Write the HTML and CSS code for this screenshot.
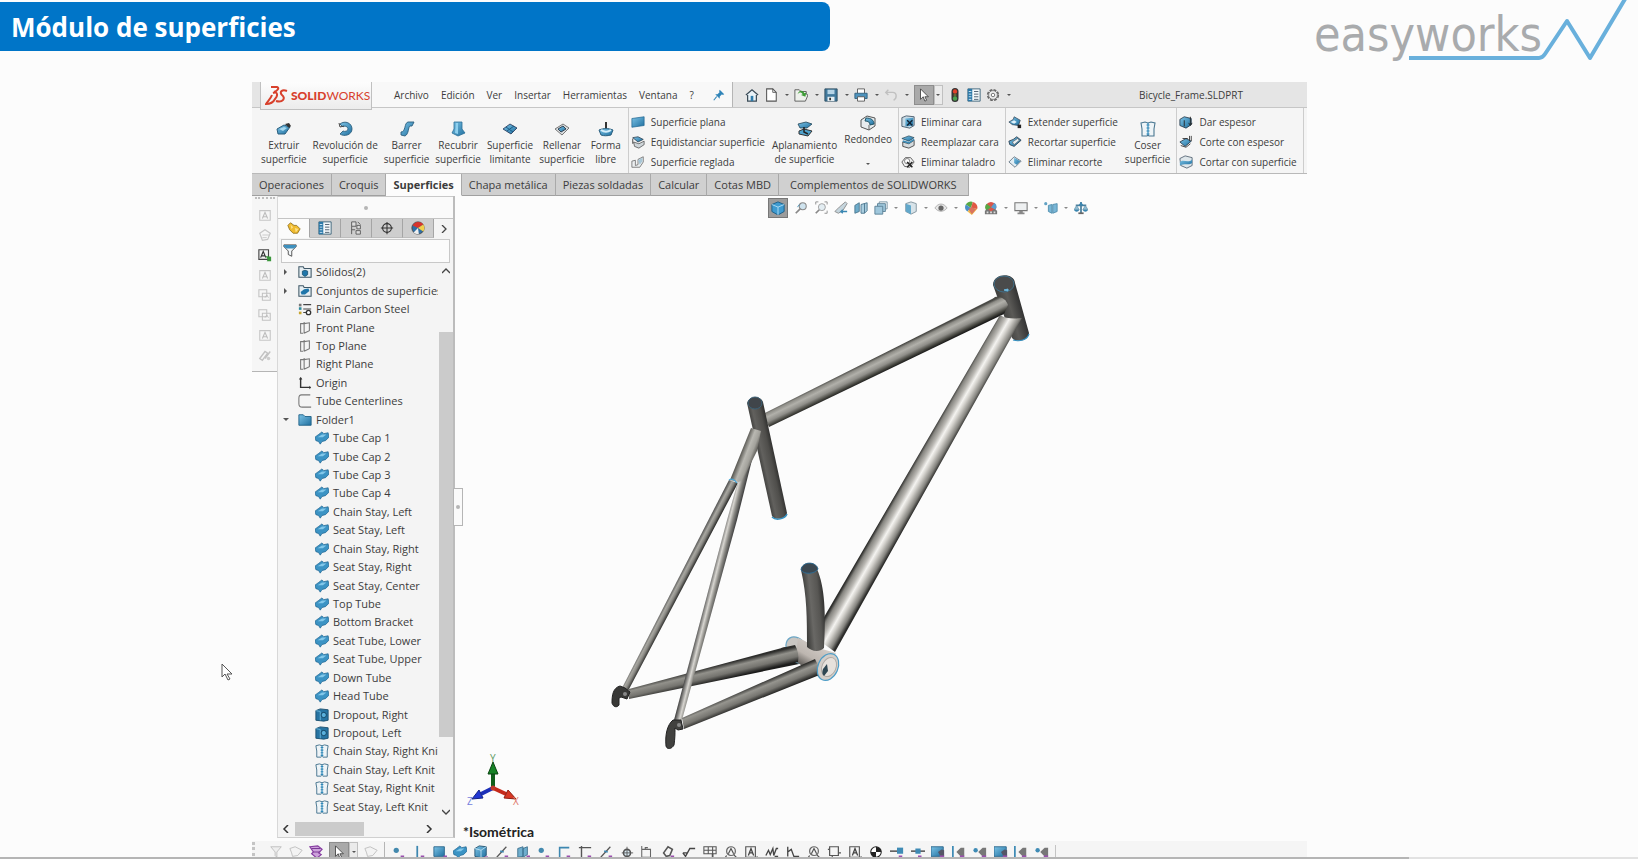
FILE: index.html
```html
<!DOCTYPE html>
<html lang="es">
<head>
<meta charset="utf-8">
<meta name="viewport" content="width=device-width, initial-scale=1">
<title>Módulo de superficies</title>
<link rel="stylesheet" href="styles.css">
</head>
<body>
<svg class="sprite" aria-hidden="true">
  <defs>
    <linearGradient id="gBlue" x1="0" y1="0" x2="1" y2="1"><stop offset="0" stop-color="#7cc3e6"/><stop offset="1" stop-color="#1f6f9f"/></linearGradient>
  </defs>
  <symbol id="surf" viewBox="0 0 16 16"><path d="M0 7l4-3 4-3 2 2 5-1 1 5-4 4-4 1-2 3-2-3-3-1z" fill="#3b93c4" stroke="#1c638f" stroke-width=".8"/><path d="M3 7l5-3 5 0-4 3z" fill="#83c8ea"/></symbol>
  <symbol id="extrude" viewBox="0 0 16 16"><path d="M1 8l7-4 6 2-5 7-7 0z" fill="url(#gBlue)" stroke="#2b5f7e"/><path d="M9 3l4-1 2 3-2 2z" fill="#333"/><path d="M3 8l5-2 3 1-4 3z" fill="#a6d8ef"/></symbol>
  <symbol id="revolve" viewBox="0 0 16 16"><path d="M3 3c5-4 12-1 12 5s-8 8-12 5l3-3c2 1 5 0 5-2s-3-4-5-2z" fill="url(#gBlue)" stroke="#2b5f7e" stroke-width=".9"/><path d="M2 2l1 4 4-1" fill="none" stroke="#444"/></symbol>
  <symbol id="sweep" viewBox="0 0 16 16"><path d="M2 14v-3c5 0 3-9 7-10h6l-2 4h-2c-2 1-1 8-5 10z" fill="url(#gBlue)" stroke="#2b5f7e" stroke-width=".9"/></symbol>
  <symbol id="loft" viewBox="0 0 16 16"><path d="M4 1h8v7l3 4-7 3-6-3 2-4z" fill="url(#gBlue)" stroke="#2b6e97" stroke-width=".8"/><path d="M6 2h2v11l-3-1z" fill="#8fd0ee"/></symbol>
  <symbol id="bound" viewBox="0 0 16 16"><path d="M1 8l7-5 7 4-6 6z" fill="url(#gBlue)" stroke="#235" stroke-width=".8"/><path d="M4 6l7 5M12 5l-7 5" stroke="#1a5b86"/></symbol>
  <symbol id="fill" viewBox="0 0 16 16"><path d="M1 8l8-5 6 4-7 7z" fill="#d9dcde" stroke="#777"/><path d="M4 8l5-3 3 3-5 3z" fill="url(#gBlue)" stroke="#345"/></symbol>
  <symbol id="free" viewBox="0 0 16 16"><path d="M1 9c5-2 9-2 14 0l-2 5c-4 1-7 1-10 0z" fill="url(#gBlue)" stroke="#2b5f7e"/><path d="M3 9c3 2 7 2 10 0" stroke="#d5eefa" stroke-width="2" fill="none"/><path d="M7 1h2v6h-2z" fill="#333"/></symbol>
  <symbol id="planar" viewBox="0 0 16 16"><path d="M1 4l14-2v10l-14 2z" fill="url(#gBlue)" stroke="#1c638f" stroke-width=".8"/></symbol>
  <symbol id="offset" viewBox="0 0 16 16"><path d="M2 3l6-1 6 3-6 3z" fill="url(#gBlue)" stroke="#234" stroke-width=".8"/><path d="M3 8l6 2 6-3v4l-6 4-5-2z" fill="#cfd6da" stroke="#444" stroke-width=".8"/><path d="M2 4v6" stroke="#333"/></symbol>
  <symbol id="ruled" viewBox="0 0 16 16"><path d="M1 7l4-1v6l3-1V5l6-3v6l-4 6-9 0z" fill="#eceff1" stroke="#666" stroke-width=".9"/><path d="M8 6l5-3v4l-3 4z" fill="#a8c6d6"/></symbol>
  <symbol id="flatten" viewBox="0 0 16 16"><path d="M1 3l8-2 6 2-5 4H3z" fill="url(#gBlue)" stroke="#245" stroke-width=".8"/><path d="M2 10l5-2 8 2-4 5-9-2z" fill="#4fa3ce" stroke="#333"/><path d="M7 6v5l4 2" stroke="#222" fill="none" stroke-width="1.5"/></symbol>
  <symbol id="fillet" viewBox="0 0 16 16"><path d="M1 5l6-4 8 2v8l-6 4-8-3z" fill="#e8ecee" stroke="#555"/><path d="M6 3c5 0 8 2 8 6l-4 1c0-3-2-4-5-4z" fill="url(#gBlue)" stroke="#256"/><path d="M9 10v5" stroke="#666"/></symbol>
  <symbol id="delface" viewBox="0 0 16 16"><path d="M1 3l5-2 9 1v10l-5 3-9-2z" fill="#c7dae5" stroke="#456"/><path d="M5 4l9-1v9l-9 1z" fill="url(#gBlue)"/><path d="M7 6l6 6M13 6l-6 6" stroke="#123" stroke-width="1.6"/></symbol>
  <symbol id="replace" viewBox="0 0 16 16"><path d="M1 4l8-3 6 2-6 4z" fill="url(#gBlue)" stroke="#245" stroke-width=".8"/><path d="M2 8l7 2 6-4v6l-6 3-7-2z" fill="#d5dbde" stroke="#444"/><path d="M2 7l7 2 6-4" fill="none" stroke="#3b8bb6" stroke-width="2"/></symbol>
  <symbol id="delhole" viewBox="0 0 16 16"><path d="M1 8l4-5 6 0 4 5-5 6-6-1z" fill="#f2f2f2" stroke="#555"/><circle cx="7" cy="7" r="3" fill="#fff" stroke="#777"/><path d="M7 8l6 6M13 8l-6 6" stroke="#222" stroke-width="1.8"/></symbol>
  <symbol id="extend" viewBox="0 0 16 16"><path d="M1 8l5-3 1-3 7 4-2 6-7-1z" fill="url(#gBlue)" stroke="#345" stroke-width=".8"/><path d="M3 8l4-2 3 2-3 2z" fill="#dff1fa"/><path d="M11 11h4v4h-4z" fill="#222"/></symbol>
  <symbol id="trim" viewBox="0 0 16 16"><path d="M1 7l5-2 4-3 5 4-8 7-5-2z" fill="url(#gBlue)" stroke="#234" stroke-width=".9"/><path d="M5 8l6-4 2 2-6 5z" fill="#e8eef1" stroke="#444" stroke-width=".6"/></symbol>
  <symbol id="untrim" viewBox="0 0 16 16"><path d="M1 8l6-6 8 5-7 7z" fill="#e2edf3" stroke="#567" stroke-width=".9"/><path d="M7 3l7 4-4 4-3-2z" fill="url(#gBlue)"/></symbol>
  <symbol id="knit" viewBox="0 0 16 16"><path d="M1 2l4-1 3 1 3-1 4 1-1 6v7H9l-1-1-1 1H2V8z" fill="#eef4f7" stroke="#4a7791" stroke-width="1.1"/><path d="M8 2v12M6.500 4h3M6.500 7h3M6.500 10h3M6.500 13h3" stroke="#3088b8" stroke-width="1.2"/></symbol>
  <symbol id="thick" viewBox="0 0 16 16"><path d="M1 5l5-3 8 2v7l-6 4-7-3z" fill="url(#gBlue)" stroke="#234" stroke-width=".9"/><path d="M6 6v7M13 2v9M11 9l2 3 2-3" stroke="#222" fill="none"/></symbol>
  <symbol id="thickcut" viewBox="0 0 16 16"><path d="M1 8l7-4 6 3-7 6z" fill="url(#gBlue)" stroke="#234" stroke-width=".9"/><path d="M2 12l6 2 5-4M12 1v6M14 1v6M4 4h6" stroke="#333" fill="none"/></symbol>
  <symbol id="surfcut" viewBox="0 0 16 16"><path d="M1 4l6-3 8 2v9l-6 3-7-3z" fill="#dfe7eb" stroke="#456" stroke-width=".9"/><path d="M1 8c4-4 9 2 14-3v4c-4 3-9 0-14 3z" fill="url(#gBlue)"/></symbol>
  <symbol id="pin" viewBox="0 0 16 16"><path d="M9 1l6 6-2 1-1-1-3 3 0 3-6-6h3l3-3-1-1z" fill="#2f84b8"/><path d="M5 10l-4 5" stroke="#2f84b8" stroke-width="1.500"/></symbol>
  <symbol id="home" viewBox="0 0 16 16"><path d="M1 8l7-6 7 6M3 8v7h10V8" fill="#e8f2f8" stroke="#3b4b57" stroke-width="1.400"/><path d="M6.500 9h3v6h-3z" fill="#2f7cab"/></symbol>
  <symbol id="new" viewBox="0 0 16 16"><path d="M3 1h7l4 4v10H3z" fill="#fff" stroke="#555" stroke-width="1.200"/><path d="M10 1v4h4" fill="none" stroke="#555"/></symbol>
  <symbol id="open" viewBox="0 0 16 16"><path d="M1 15V2h5l2 2h6v3l2 1-3 7z" fill="#eef1ec" stroke="#555"/><path d="M4 7c2-5 6-5 8-1l2-1-1 5-5-2 2-1c-2-3-4-2-6 0z" fill="#3c9b35"/></symbol>
  <symbol id="save" viewBox="0 0 16 16"><path d="M1 1h14v14H1z" fill="#41799c" stroke="#2a4a5e"/><path d="M4 2h8v5H4z" fill="#b6d4e6"/><path d="M4 10h8v5H4z" fill="#e6eef2"/><path d="M6 11h2v3H6z" fill="#333"/></symbol>
  <symbol id="print" viewBox="0 0 16 16"><path d="M4 6V1h8v5" fill="#fff" stroke="#555"/><path d="M1 6h14v6H1z" fill="#4e93bd" stroke="#2f5f7e"/><path d="M4 10h8v5H4z" fill="#fff" stroke="#555"/></symbol>
  <symbol id="undo" viewBox="0 0 16 16"><path d="M2 5h8c5 0 5 7 1 9M5 2L2 5l3 3" fill="none" stroke="#c0c0c0" stroke-width="1.600"/></symbol>
  <symbol id="arrow" viewBox="0 0 16 16"><path d="M4 1v12l3-3 2 5 2-1-2-4h4z" fill="#fff" stroke="#444"/></symbol>
  <symbol id="traffic" viewBox="0 0 16 16"><rect x="4" y="0" width="8" height="16" rx="4" fill="#333"/><circle cx="8" cy="4" r="2.500" fill="#e0402a"/><circle cx="8" cy="8" r="1.800" fill="#6b6434"/><circle cx="8" cy="12" r="2.500" fill="#4ba24e"/></symbol>
  <symbol id="props" viewBox="0 0 16 16"><path d="M1 1h14v14H1z" fill="#f4f8fa" stroke="#345b73"/><path d="M1 1h5v14H1z" fill="#2d79a8"/><path d="M8 4h5M8 7h5M8 10h5M8 13h5" stroke="#456"/><path d="M2 4h3M2 7h3M2 10h3M2 13h3" stroke="#d9edf8"/></symbol>
  <symbol id="gear" viewBox="0 0 16 16"><circle cx="8" cy="8" r="6" fill="none" stroke="#666" stroke-width="2" stroke-dasharray="3.200 1.500"/><circle cx="8" cy="8" r="5" fill="#eee" stroke="#777"/><circle cx="8" cy="8" r="2" fill="#fff" stroke="#666"/></symbol>
  <symbol id="cube" viewBox="0 0 16 16"><path d="M1 4l7-3 7 3v8l-7 4-7-4z" fill="#3f9bd0" stroke="#155a86"/><path d="M1 4l7 3 7-3M8 7v9" stroke="#b7e0f5" fill="none"/></symbol>
  <symbol id="lens" viewBox="0 0 16 16"><circle cx="10" cy="6" r="4" fill="#cfe3ee" stroke="#888" stroke-width="1.200"/><path d="M7 9l-5 5" stroke="#888" stroke-width="2"/><path d="M4 7l2-3" stroke="#4b96bf"/></symbol>
  <symbol id="lensarea" viewBox="0 0 16 16"><circle cx="9" cy="7" r="4" fill="#e3edf2" stroke="#999"/><path d="M6 10l-4 4" stroke="#888" stroke-width="2"/><path d="M2 4V1h3M12 1h3v3M15 11v3h-3" fill="none" stroke="#888"/></symbol>
  <symbol id="prev" viewBox="0 0 16 16"><path d="M1 12l5-5 7-6 2 2-5 8-5 3z" fill="#c5d5dd" stroke="#888"/><path d="M15 12H8l2-2M8 12l2 2" stroke="#3987b3" fill="none" stroke-width="1.500"/></symbol>
  <symbol id="section" viewBox="0 0 16 16"><path d="M1 5l5-3v10l-5 2z" fill="#6eaccb" stroke="#48748b"/><path d="M8 4l7-2v9l-3 3-4 0z" fill="#a9cddf" stroke="#48748b"/><path d="M12 3v11" stroke="#48748b"/></symbol>
  <symbol id="orient" viewBox="0 0 16 16"><path d="M1 6h9v9H1zM4 6V3h9v9h-3" fill="#9fc7dc" stroke="#587e93"/><path d="M6 3V1h9v8h-2" fill="none" stroke="#6d8c9c"/></symbol>
  <symbol id="display" viewBox="0 0 16 16"><path d="M2 3l6-2 6 2v9l-6 3-6-3z" fill="#d7e3e9" stroke="#7b8e98"/><path d="M2 3l6 2v10l-6-3z" fill="#62a8cb"/></symbol>
  <symbol id="eye" viewBox="0 0 16 16"><path d="M1 8c4-6 10-6 14 0-4 5-10 5-14 0z" fill="#e8e8e8" stroke="#aaa"/><circle cx="8" cy="8" r="3" fill="#666"/></symbol>
  <symbol id="ball" viewBox="0 0 16 16"><path d="M8 8L2 4c2-4 7-4 8-3z" fill="#58a945"/><path d="M8 8L2 4c-2 4 0 7 2 8z" fill="#4a90c8"/><path d="M8 8l2-7c5 1 6 6 5 8z" fill="#e05a44"/><path d="M4 12l4-4 7 1-6 7z" fill="#f0b94a"/><path d="M5 9l4-2 5 2-5 6z" fill="#d9745f"/></symbol>
  <symbol id="beach" viewBox="0 0 16 16"><circle cx="8" cy="8" r="7" fill="#2e6fa5" stroke="#444"/><path d="M8 8L2 5a7 7 0 0 1 12-1z" fill="#d8352c"/><path d="M8 8l6-4a7 7 0 0 1 0 8z" fill="#f2d04c"/><path d="M8 8L3 13a7 7 0 0 0 6 2z" fill="#eee"/></symbol>
  <symbol id="scene" viewBox="0 0 16 16"><circle cx="8" cy="7" r="6" fill="#d9564a"/><path d="M8 7L3 3a6 6 0 0 0 0 8z" fill="#58a945"/><path d="M8 7l4-5a6 6 0 0 1 1 8z" fill="#5c9fd0"/><path d="M1 11l3-2 4 3 4-3 3 2v4H1z" fill="#777"/><path d="M3 12h2v2H3zM7 12h2v2H7zM11 12h2v2h-2z" fill="#ddd"/></symbol>
  <symbol id="monitor" viewBox="0 0 16 16"><path d="M1 2h14v9H1z" fill="#eef0f1" stroke="#777" stroke-width="1.200"/><path d="M6 11h4v2h2v2H4v-2h2z" fill="#888"/></symbol>
  <symbol id="xray" viewBox="0 0 16 16"><path d="M5 5l4-1v10l-4-2zM10 4l5-1v9l-5 2z" fill="#79b6d6" stroke="#4d8cac"/><circle cx="2" cy="3" r="1.800" fill="#62a2c4"/></symbol>
  <symbol id="scale" viewBox="0 0 16 16"><path d="M8 1v13M2 5h12" stroke="#4b7f9c" stroke-width="2"/><path d="M8 1l3 4H5z" fill="#3a86b0"/><path d="M3 5l-3 5h6zM13 5l-3 5h6z" fill="#8dbcd3" stroke="#4b7f9c" stroke-width=".6"/><path d="M0 10c1 3 5 3 6 0zM10 10c1 3 5 3 6 0z" fill="#3a86b0"/><path d="M5 14h6" stroke="#666" stroke-width="2"/></symbol>
  <symbol id="part" viewBox="0 0 16 16"><path d="M1 5l3-3 4 3 3 0 4 4-3 5-5 0-4-4z" fill="#f0bb2e" stroke="#8a6a1a" stroke-width=".9"/><path d="M4 4l3 3-2 2zM9 8l4 1-3 4z" fill="#fbe08a"/></symbol>
  <symbol id="config" viewBox="0 0 16 16"><path d="M3 1h5v5H3zM3 6v9M3 10h4M9 5h4v4H9zM8 11h5v4H8z" fill="#ddd" stroke="#555"/><path d="M10 1l3 3" stroke="#555"/></symbol>
  <symbol id="target" viewBox="0 0 16 16"><circle cx="8" cy="8" r="5" fill="none" stroke="#333" stroke-width="1.300"/><path d="M8 1v14M1 8h14" stroke="#333" stroke-width="1.200"/></symbol>
  <symbol id="funnel" viewBox="0 0 16 16"><path d="M1 1h14v2l-5 5v6l-4-2V8L1 3z" fill="#f2f6f8" stroke="#444"/><path d="M1 1h14v2l-3 2H4L1 3z" fill="#3d8fbd"/></symbol>
  <symbol id="fsolid" viewBox="0 0 16 16"><path d="M1 14V2h5l1 2h8v10z" fill="#e6eef2" stroke="#3e5766" stroke-width="1.200"/><path d="M5 7l3-1 3 1v4l-3 2-3-2z" fill="#1f76aa" stroke="#1f5878"/></symbol>
  <symbol id="fsurf" viewBox="0 0 16 16"><path d="M1 14V2h5l1 2h8v10z" fill="#e6eef2" stroke="#3e5766" stroke-width="1.200"/><path d="M3 9l4-3 5-1 1 3-5 4-4 0z" fill="#1f76aa"/></symbol>
  <symbol id="material" viewBox="0 0 16 16"><path d="M1 2h3v3H1z" fill="#777"/><path d="M1 6h3v3H1z" fill="#2c8a9c"/><path d="M1 11h3v3H1z" fill="#c7a52e"/><path d="M6 3h9M6 8h9M6 12h4" stroke="#444" stroke-width="1.300"/><circle cx="12" cy="12" r="2.500" fill="#fff" stroke="#333" stroke-width="1.500"/></symbol>
  <symbol id="plane" viewBox="0 0 16 16"><path d="M7 3H3v11h3M7 1v13M7 3l6-1v9l-6 3" fill="none" stroke="#777" stroke-width="1.200"/></symbol>
  <symbol id="origin" viewBox="0 0 16 16"><path d="M3 2v11h11" fill="none" stroke="#333" stroke-width="1.600"/><path d="M1 4l2-3 2 3zM13 11l2 2-2 2z" fill="#333"/></symbol>
  <symbol id="sketch" viewBox="0 0 16 16"><path d="M14 1H4C2 1 1 2 1 5v6c0 2 1 4 4 4h10" fill="none" stroke="#777" stroke-width="1.200"/></symbol>
  <symbol id="folder" viewBox="0 0 16 16"><path d="M1 14V2h5l2 2h7v10z" fill="url(#gBlue)" stroke="#1d5f85"/></symbol>
  <symbol id="drop" viewBox="0 0 16 16"><path d="M1 3l5-2 9 1v12l-5 1-9-1z" fill="#2774a3" stroke="#174b6c"/><path d="M1 3l5 1v10" fill="none" stroke="#6db7dc"/><circle cx="10" cy="8" r="3" fill="#5bb0dc" stroke="#12415e"/></symbol>
  <symbol id="note" viewBox="0 0 16 16"><path d="M2 3h12v11H2z" fill="none" stroke="#c6c6c6" stroke-width="1.200"/><path d="M5 12l3-7 3 7M6 10h4" fill="none" stroke="#bdbdbd" stroke-width="1.300"/></symbol>
  <symbol id="noteon" viewBox="0 0 16 16"><path d="M1 2h11v11H1z" fill="#f3f3f3" stroke="#444" stroke-width="1.300"/><path d="M3 11l3-7 3 7M4 9h4" fill="none" stroke="#333" stroke-width="1.300"/><path d="M9 9l6 1v5h-5l1-2z" fill="#39963a"/></symbol>
  <symbol id="tag" viewBox="0 0 16 16"><path d="M2 6l6-4 6 4-3 7-6 1z" fill="none" stroke="#c6c6c6" stroke-width="1.300"/><path d="M5 8h8M5 11h5" stroke="#c6c6c6"/></symbol>
  <symbol id="stack" viewBox="0 0 16 16"><path d="M1 2h9v8H1zM5 6h9v8H5z" fill="#f6f6f6" stroke="#c2c2c2" stroke-width="1.200"/><path d="M8 11l2-3 2 3" fill="none" stroke="#bbb"/></symbol>
  <symbol id="clip" viewBox="0 0 16 16"><path d="M2 12l6-8 3 2-6 8zM8 12l6-8" fill="none" stroke="#c2c2c2" stroke-width="1.500"/><circle cx="12" cy="12" r="2" fill="#ccc"/></symbol>
  <symbol id="bfil" viewBox="0 0 16 16"><path d="M2 2h12l-5 6v6l-2-2V8z" fill="#eee" stroke="#bbb"/></symbol>
  <symbol id="bcub" viewBox="0 0 16 16"><path d="M1 4l6-2 8 4-5 6-6 1-1-4z" fill="#f3f3f3" stroke="#bbb"/></symbol>
  <symbol id="bpur" viewBox="0 0 16 16"><path d="M1 2l9-1 5 4-4 4 3 2-5 4-6-5 2-2z" fill="#cda2db" stroke="#853aa0" stroke-width="1.300"/><path d="M3 4h10M5 8h8" stroke="#6f2c8a"/></symbol>
  <symbol id="bdot" viewBox="0 0 16 16"><circle cx="6" cy="6" r="3" fill="#4389ae"/><path d="M11 12h4v2h-4z" fill="#9a4fae"/></symbol>
  <symbol id="bline" viewBox="0 0 16 16"><path d="M6 1v13" stroke="#3d87b0" stroke-width="2"/><path d="M10 12h4v2h-4z" fill="#9a4fae"/></symbol>
  <symbol id="bface" viewBox="0 0 16 16"><path d="M1 2h12v11H1z" fill="url(#gBlue)" stroke="#276489"/><path d="M12 12h4v2h-4z" fill="#9a4fae"/></symbol>
  <symbol id="bcube" viewBox="0 0 16 16"><path d="M1 4l5-3 8 1v10l-5 3-8-2z" fill="url(#gBlue)" stroke="#20506e"/><path d="M1 4l7 2v8M8 6l6-4" fill="none" stroke="#bfe1f1"/><path d="M12 13h4v2h-4z" fill="#9a4fae"/></symbol>
  <symbol id="bdiag" viewBox="0 0 16 16"><path d="M2 14L13 2" stroke="#555" stroke-width="1.400"/><path d="M6 7l4 1" stroke="#3d87b0" stroke-width="2"/><path d="M11 12h4v2h-4z" fill="#9a4fae"/></symbol>
  <symbol id="bpl" viewBox="0 0 16 16"><path d="M2 4l6-2v11l-6 1zM8 4l5-2v9l-5 3z" fill="#6faece" stroke="#3a6e8b"/><path d="M12 12h4v2h-4z" fill="#9a4fae"/></symbol>
  <symbol id="bang" viewBox="0 0 16 16"><path d="M3 14V3h11" fill="none" stroke="#3d87b0" stroke-width="1.800"/><path d="M11 12h4v2h-4z" fill="#9a4fae"/></symbol>
  <symbol id="bdim" viewBox="0 0 16 16"><path d="M4 14V3h11M1 3h6M4 1v4" fill="none" stroke="#555" stroke-width="1.600"/><path d="M11 12h4v2h-4z" fill="#9a4fae"/></symbol>
  <symbol id="bcirc" viewBox="0 0 16 16"><circle cx="8" cy="9" r="4" fill="#d7e8f1" stroke="#555" stroke-width="1.800"/><path d="M8 2v14M2 9h13" stroke="#555"/></symbol>
  <symbol id="brect" viewBox="0 0 16 16"><path d="M2 1v14M2 5h10v9H2M6 5V3h3" fill="none" stroke="#666" stroke-width="1.200"/></symbol>
  <symbol id="bhex" viewBox="0 0 16 16"><path d="M3 9l5-7 5 3-3 7-4 1z" fill="none" stroke="#555" stroke-width="1.800"/><path d="M11 12h4v2h-4z" fill="#9a4fae"/></symbol>
  <symbol id="bchk" viewBox="0 0 16 16"><path d="M1 9l3 4 5-9h6M1 9h5" fill="none" stroke="#444" stroke-width="1.600"/></symbol>
  <symbol id="bbox" viewBox="0 0 16 16"><path d="M1 2h14v8H1zM1 6h14M6 2v8M11 2v8" fill="none" stroke="#555" stroke-width="1.200"/><path d="M11 10v4" stroke="#555" stroke-width="2"/></symbol>
  <symbol id="bmag" viewBox="0 0 16 16"><circle cx="8" cy="7" r="5" fill="none" stroke="#666" stroke-width="1.400"/><path d="M5 10l3-6 3 6M3 12l-2 3M11 11l4 4" fill="none" stroke="#555" stroke-width="1.400"/></symbol>
  <symbol id="btxt" viewBox="0 0 16 16"><path d="M2 2h11v12H2z" fill="none" stroke="#555" stroke-width="1.300"/><path d="M5 12l3-8 3 8M6 9h4" fill="none" stroke="#444" stroke-width="1.500"/><path d="M14 13h2v2h-2z" fill="#555"/></symbol>
  <symbol id="bweld" viewBox="0 0 16 16"><path d="M1 12l3-6 2 5 3-7 1 8 3-8h2M11 13h4" fill="none" stroke="#444" stroke-width="1.500"/></symbol>
  <symbol id="bstep" viewBox="0 0 16 16"><path d="M2 2v11M2 8l4-3 3 8h6" fill="none" stroke="#444" stroke-width="1.500"/></symbol>
  <symbol id="bsq" viewBox="0 0 16 16"><path d="M3 2h10v10H3zM1 5h2M13 9h3M6 12v3" fill="none" stroke="#555" stroke-width="1.400"/></symbol>
  <symbol id="bcog" viewBox="0 0 16 16"><circle cx="8" cy="8" r="6" fill="#fff" stroke="#222" stroke-width="1.200"/><path d="M8 8V2a6 6 0 0 1 6 6zM8 8v6a6 6 0 0 1-6-6z" fill="#222"/></symbol>
  <symbol id="bcon" viewBox="0 0 16 16"><path d="M0 7h9" stroke="#444" stroke-width="1.600"/><path d="M8 3h7v7H8z" fill="#3f8bb5"/><path d="M10 12h4v2h-4z" fill="#9a4fae"/></symbol>
  <symbol id="bcon2" viewBox="0 0 16 16"><path d="M0 7h16" stroke="#444" stroke-width="1.600"/><path d="M5 4h6v6H5z" fill="#3f8bb5"/><path d="M8 12h4v2H8z" fill="#9a4fae"/></symbol>
  <symbol id="bvert" viewBox="0 0 16 16"><path d="M1 1v13" stroke="#3f8bb5" stroke-width="2"/><path d="M5 8l5-5 4 0v10h-4z" fill="#777"/><path d="M9 12h5v3H9z" fill="#9a4fae"/></symbol>
  <symbol id="bpt" viewBox="0 0 16 16"><circle cx="3" cy="6" r="2.500" fill="#3f8bb5"/><path d="M6 8l5-5 4 0v10h-4z" fill="#777"/><path d="M10 12h5v3h-5z" fill="#9a4fae"/></symbol>
  <symbol id="bfp" viewBox="0 0 16 16"><path d="M0 2h14v11H0z" fill="url(#gBlue)" stroke="#276489"/><path d="M8 8l4-3 3 1v7h-4z" fill="#556"/><path d="M10 12h5v3h-5z" fill="#9a4fae"/></symbol>
</svg>

<header class="slide-head">
  <h1 class="banner">Módulo de superficies</h1>
  <svg class="brand" viewBox="0 0 348 70" role="img" aria-label="easyworks">
    <text class="brand-text" x="24" y="51">easyworks</text>
    <path d="M119 58h130c3 0 4-1 6-4l22-33 23 37L338-6" fill="none" stroke="#69b0dc" stroke-width="4" stroke-linejoin="round"/>
  </svg>
</header>

<main class="stage">
  <svg class="cursor" viewBox="0 0 12 18" aria-hidden="true"><path d="M1 1v13l3-3 3 6 2-1-3-5h5z" fill="#fff" stroke="#555"/></svg>
  <section class="app">
    <div class="titlebar">
      <div class="sw-logo">
        <svg class="sw-mark" viewBox="0 0 24 22" aria-hidden="true"><path d="M6 2h6c3 1 0 4-3 5M8 8c5-2 5 3 2 6-2 4-6 5-9 5 3-4 5-6 6-9M22 6c-5-2-8 1-5 4 4 3 1 8-6 6" fill="none" stroke="#d8402c" stroke-width="2"/></svg>
        <span class="sw-name"><b>SOLID</b>WORKS</span>
      </div>
      <nav class="menu">
        <button>Archivo</button><button>Edición</button><button>Ver</button><button>Insertar</button><button>Herramientas</button><button>Ventana</button><button>?</button>
        <button class="pin" aria-label="Fijar"><svg class="i12"><use href="#pin"/></svg></button>
      </nav>
      <div class="quick">
        <button aria-label="Inicio"><svg class="i14"><use href="#home"/></svg></button>
        <button class="dd" aria-label="Nuevo"><svg class="i14"><use href="#new"/></svg></button>
        <button class="dd" aria-label="Abrir"><svg class="i14"><use href="#open"/></svg></button>
        <button class="dd" aria-label="Guardar"><svg class="i14"><use href="#save"/></svg></button>
        <button class="dd" aria-label="Imprimir"><svg class="i14"><use href="#print"/></svg></button>
        <button class="dd" aria-label="Deshacer"><svg class="i14"><use href="#undo"/></svg></button>
        <button class="pick" aria-label="Seleccionar"><svg class="i16"><use href="#arrow"/></svg><span></span></button>
        <button aria-label="Reconstruir"><svg class="i14"><use href="#traffic"/></svg></button>
        <button aria-label="Propiedades"><svg class="i14"><use href="#props"/></svg></button>
        <button class="dd" aria-label="Opciones"><svg class="i14"><use href="#gear"/></svg></button>
      </div>
      <span class="doc">Bicycle_Frame.SLDPRT</span>
    </div>

    <div class="ribbon">
      <div class="group bigs">
        <button class="big"><svg class="i16"><use href="#extrude"/></svg>Extruir<br>superficie</button>
        <button class="big"><svg class="i16"><use href="#revolve"/></svg>Revolución de<br>superficie</button>
        <button class="big"><svg class="i16"><use href="#sweep"/></svg>Barrer<br>superficie</button>
        <button class="big"><svg class="i16"><use href="#loft"/></svg>Recubrir<br>superficie</button>
        <button class="big"><svg class="i16"><use href="#bound"/></svg>Superficie<br>limitante</button>
        <button class="big"><svg class="i16"><use href="#fill"/></svg>Rellenar<br>superficie</button>
        <button class="big"><svg class="i16"><use href="#free"/></svg>Forma<br>libre</button>
      </div>
      <div class="group">
        <div class="rows">
          <button><svg class="i14"><use href="#planar"/></svg>Superficie plana</button>
          <button><svg class="i14"><use href="#offset"/></svg>Equidistanciar superficie</button>
          <button><svg class="i14"><use href="#ruled"/></svg>Superficie reglada</button>
        </div>
        <button class="big"><svg class="i16"><use href="#flatten"/></svg>Aplanamiento<br>de superficie</button>
        <button class="big high"><svg class="i16"><use href="#fillet"/></svg>Redondeo<span class="caret"></span></button>
      </div>
      <div class="group">
        <div class="rows">
          <button><svg class="i14"><use href="#delface"/></svg>Eliminar cara</button>
          <button><svg class="i14"><use href="#replace"/></svg>Reemplazar cara</button>
          <button><svg class="i14"><use href="#delhole"/></svg>Eliminar taladro</button>
        </div>
      </div>
      <div class="group">
        <div class="rows">
          <button><svg class="i14"><use href="#extend"/></svg>Extender superficie</button>
          <button><svg class="i14"><use href="#trim"/></svg>Recortar superficie</button>
          <button><svg class="i14"><use href="#untrim"/></svg>Eliminar recorte</button>
        </div>
        <button class="big"><svg class="i16"><use href="#knit"/></svg>Coser<br>superficie</button>
      </div>
      <div class="group">
        <div class="rows">
          <button><svg class="i14"><use href="#thick"/></svg>Dar espesor</button>
          <button><svg class="i14"><use href="#thickcut"/></svg>Corte con espesor</button>
          <button><svg class="i14"><use href="#surfcut"/></svg>Cortar con superficie</button>
        </div>
      </div>
    </div>

    <nav class="tabs">
      <button>Operaciones</button><button>Croquis</button><button class="on">Superficies</button><button>Chapa metálica</button><button>Piezas soldadas</button><button>Calcular</button><button>Cotas MBD</button><button class="last">Complementos de SOLIDWORKS</button>
    </nav>

    <div class="work">
      <aside class="strip">
        <button aria-label="Nota"><svg class="i14"><use href="#note"/></svg></button>
        <button aria-label="Etiqueta"><svg class="i14"><use href="#tag"/></svg></button>
        <button aria-label="Anotación"><svg class="i14"><use href="#noteon"/></svg></button>
        <button aria-label="Cota"><svg class="i14"><use href="#note"/></svg></button>
        <button aria-label="Tolerancia"><svg class="i14"><use href="#stack"/></svg></button>
        <button aria-label="Capas"><svg class="i14"><use href="#stack"/></svg></button>
        <button aria-label="Vista"><svg class="i14"><use href="#note"/></svg></button>
        <button aria-label="Vínculo"><svg class="i14"><use href="#clip"/></svg></button>
      </aside>

      <aside class="panel">
        <div class="grab"><i></i></div>
        <div class="ptabs">
          <button class="on" aria-label="Árbol"><svg class="i14"><use href="#part"/></svg></button>
          <button aria-label="Propiedades"><svg class="i14"><use href="#props"/></svg></button>
          <button aria-label="Configuraciones"><svg class="i14"><use href="#config"/></svg></button>
          <button aria-label="DimXpert"><svg class="i14"><use href="#target"/></svg></button>
          <button aria-label="Apariencias"><svg class="i14"><use href="#beach"/></svg></button>
          <button class="more" aria-label="Más"><svg class="i8" viewBox="0 0 8 8"><path d="M2 0l4 4-4 4" fill="none" stroke="#444" stroke-width="1.300"/></svg></button>
        </div>
        <label class="filter"><svg class="i14"><use href="#funnel"/></svg><input type="text" aria-label="Filtro"></label>
        <div class="treebox">
          <ul class="tree">
            <li class="closed"><svg class="i14"><use href="#fsolid"/></svg>Sólidos(2)</li>
            <li class="closed"><svg class="i14"><use href="#fsurf"/></svg>Conjuntos de superficies</li>
            <li><svg class="i14"><use href="#material"/></svg>Plain Carbon Steel</li>
            <li><svg class="i14"><use href="#plane"/></svg>Front Plane</li>
            <li><svg class="i14"><use href="#plane"/></svg>Top Plane</li>
            <li><svg class="i14"><use href="#plane"/></svg>Right Plane</li>
            <li><svg class="i14"><use href="#origin"/></svg>Origin</li>
            <li><svg class="i14"><use href="#sketch"/></svg>Tube Centerlines</li>
            <li class="opened"><svg class="i14"><use href="#folder"/></svg>Folder1</li>
            <li class="sub"><svg class="i14"><use href="#surf"/></svg>Tube Cap 1</li>
            <li class="sub"><svg class="i14"><use href="#surf"/></svg>Tube Cap 2</li>
            <li class="sub"><svg class="i14"><use href="#surf"/></svg>Tube Cap 3</li>
            <li class="sub"><svg class="i14"><use href="#surf"/></svg>Tube Cap 4</li>
            <li class="sub"><svg class="i14"><use href="#surf"/></svg>Chain Stay, Left</li>
            <li class="sub"><svg class="i14"><use href="#surf"/></svg>Seat Stay, Left</li>
            <li class="sub"><svg class="i14"><use href="#surf"/></svg>Chain Stay, Right</li>
            <li class="sub"><svg class="i14"><use href="#surf"/></svg>Seat Stay, Right</li>
            <li class="sub"><svg class="i14"><use href="#surf"/></svg>Seat Stay, Center</li>
            <li class="sub"><svg class="i14"><use href="#surf"/></svg>Top Tube</li>
            <li class="sub"><svg class="i14"><use href="#surf"/></svg>Bottom Bracket</li>
            <li class="sub"><svg class="i14"><use href="#surf"/></svg>Seat Tube, Lower</li>
            <li class="sub"><svg class="i14"><use href="#surf"/></svg>Seat Tube, Upper</li>
            <li class="sub"><svg class="i14"><use href="#surf"/></svg>Down Tube</li>
            <li class="sub"><svg class="i14"><use href="#surf"/></svg>Head Tube</li>
            <li class="sub"><svg class="i14"><use href="#drop"/></svg>Dropout, Right</li>
            <li class="sub"><svg class="i14"><use href="#drop"/></svg>Dropout, Left</li>
            <li class="sub"><svg class="i14"><use href="#knit"/></svg>Chain Stay, Right Knit</li>
            <li class="sub"><svg class="i14"><use href="#knit"/></svg>Chain Stay, Left Knit</li>
            <li class="sub"><svg class="i14"><use href="#knit"/></svg>Seat Stay, Right Knit</li>
            <li class="sub"><svg class="i14"><use href="#knit"/></svg>Seat Stay, Left Knit</li>
          </ul>
          <div class="vscroll">
            <svg class="i8" viewBox="0 0 8 8"><path d="M0 6l4-4 4 4" fill="none" stroke="#444" stroke-width="1.300"/></svg>
            <div class="vtrack"><i></i></div>
            <svg class="i8" viewBox="0 0 8 8"><path d="M0 2l4 4 4-4" fill="none" stroke="#444" stroke-width="1.300"/></svg>
          </div>
        </div>
        <div class="hscroll">
          <svg class="i8" viewBox="0 0 8 8"><path d="M6 0L2 4l4 4" fill="none" stroke="#333" stroke-width="1.500"/></svg>
          <div class="htrack"><i></i></div>
          <svg class="i8" viewBox="0 0 8 8"><path d="M2 0l4 4-4 4" fill="none" stroke="#333" stroke-width="1.500"/></svg>
        </div>
        <div class="handle"><i></i></div>
      </aside>

      <div class="view">
        <svg class="model" viewBox="455 196 852 645" preserveAspectRatio="xMinYMin meet" role="img" aria-label="Cuadro de bicicleta">
          <defs>
            <linearGradient id="tTop" gradientUnits="userSpaceOnUse" x1="880" y1="355.500" x2="887.200" y2="370.200"><stop offset="0" stop-color="#4a4a46"/><stop offset=".14" stop-color="#8f8e88"/><stop offset=".35" stop-color="#b1b0aa"/><stop offset=".62" stop-color="#8f8e89"/><stop offset=".86" stop-color="#45453f"/><stop offset="1" stop-color="#1c1c1b"/></linearGradient>
            <linearGradient id="tDown" gradientUnits="userSpaceOnUse" x1="912.500" y1="465" x2="933.300" y2="476.900"><stop offset="0" stop-color="#30302e"/><stop offset=".12" stop-color="#85847f"/><stop offset=".32" stop-color="#bbb9b4"/><stop offset=".48" stop-color="#f4f3f0"/><stop offset=".62" stop-color="#d0cec9"/><stop offset=".85" stop-color="#85847f"/><stop offset="1" stop-color="#2c2c2a"/></linearGradient>
            <linearGradient id="tDark" gradientUnits="userSpaceOnUse" x1="758" y1="460" x2="776" y2="456"><stop offset="0" stop-color="#383836"/><stop offset=".3" stop-color="#62615e"/><stop offset=".7" stop-color="#4f4e4b"/><stop offset="1" stop-color="#2a2a29"/></linearGradient>
            <linearGradient id="tLow" gradientUnits="userSpaceOnUse" x1="803" y1="600" x2="825" y2="598"><stop offset="0" stop-color="#383836"/><stop offset=".35" stop-color="#696865"/><stop offset=".7" stop-color="#575653"/><stop offset="1" stop-color="#2a2a29"/></linearGradient>
            <linearGradient id="tHead" gradientUnits="userSpaceOnUse" x1="1001" y1="314" x2="1022" y2="308"><stop offset="0" stop-color="#3c3c3a"/><stop offset=".5" stop-color="#5b5a57"/><stop offset="1" stop-color="#333"/></linearGradient>
            <linearGradient id="tStayL" gradientUnits="userSpaceOnUse" x1="664" y1="603.500" x2="672" y2="607.700"><stop offset="0" stop-color="#444"/><stop offset=".4" stop-color="#a9a8a2"/><stop offset=".65" stop-color="#8b8a85"/><stop offset="1" stop-color="#30302e"/></linearGradient>
            <linearGradient id="tStayR" gradientUnits="userSpaceOnUse" x1="699" y1="619" x2="711" y2="622"><stop offset="0" stop-color="#333"/><stop offset=".45" stop-color="#d8d6d1"/><stop offset=".7" stop-color="#8b8a85"/><stop offset="1" stop-color="#444"/></linearGradient>
            <linearGradient id="tStayC" gradientUnits="userSpaceOnUse" x1="741" y1="452" x2="754" y2="457"><stop offset="0" stop-color="#55544f"/><stop offset=".4" stop-color="#b9b8b2"/><stop offset=".75" stop-color="#a3a29c"/><stop offset="1" stop-color="#666560"/></linearGradient>
            <linearGradient id="tChL" gradientUnits="userSpaceOnUse" x1="710" y1="667" x2="713.600" y2="682"><stop offset="0" stop-color="#2d2d2b"/><stop offset=".3" stop-color="#92918b"/><stop offset=".65" stop-color="#75746f"/><stop offset="1" stop-color="#1c1c1b"/></linearGradient>
            <linearGradient id="tChR" gradientUnits="userSpaceOnUse" x1="747" y1="688" x2="753" y2="702.500"><stop offset="0" stop-color="#2d2d2b"/><stop offset=".3" stop-color="#96958f"/><stop offset=".65" stop-color="#777671"/><stop offset="1" stop-color="#1c1c1b"/></linearGradient>
            <linearGradient id="tBB" gradientUnits="userSpaceOnUse" x1="820" y1="642" x2="805" y2="668"><stop offset="0" stop-color="#d5cfca"/><stop offset=".6" stop-color="#bdb6b0"/><stop offset="1" stop-color="#5a5753"/></linearGradient>
          </defs>
          <path d="M763 414L996 297l14 6-6 11-235 113z" fill="url(#tTop)"/>
          <path d="M993 285c0-12 21-13 22-2l14 50c0 8-13 10-17 5z" fill="url(#tHead)"/>
          <ellipse cx="1004" cy="284" rx="10" ry="8" fill="#4a4b4b" stroke="#3f6e88" stroke-width="1"/>
          <path d="M1013 340c7 2 14 0 16-6" fill="none" stroke="#3590c0" stroke-width="1.200"/>
          <path d="M995 297c7-1 11 3 13 8l-4 9-16-10z" fill="url(#tTop)"/>
          <path d="M1004 290l4-1v2z" fill="#8dd0f2" stroke="#6ab6dc"/>
          <path d="M1000 315c6 4 14 4 22 3L835 652l-22-16z" fill="url(#tDown)"/>
          <path d="M629 689l164-44 6 19-170 35z" fill="url(#tChL)"/>
          <path d="M747 403c2-7 14-8 16-1l24 111c-1 6-12 8-15 3z" fill="url(#tDark)"/>
          <ellipse cx="755" cy="403" rx="7" ry="6" fill="#40454a" stroke="#3b6076"/>
          <path d="M772 517c4 4 13 2 15-3" fill="none" stroke="#3590c0" stroke-width="1.500"/>
          <path d="M729 480l9 3-110 208-6-3z" fill="url(#tStayL)"/>
          <path d="M740 474l16-30-19 76-55 200h-8l53-200z" fill="url(#tStayR)"/>
          <path d="M751 428l10 3-4 20-15 30-4 1-8-2z" fill="url(#tStayC)"/>
          <path d="M729 480c3-2 6 0 8 3" fill="none" stroke="#4aa6d5" stroke-width="1.200"/>
          <ellipse cx="797" cy="650" rx="10" ry="14" transform="rotate(-30 797 650)" fill="#c9c6c2" stroke="#6ca7c6" stroke-width="1.200"/>
          <path d="M798 638c9 3 13 8 24 11l14 4-16 24c-10-3-15-10-25-16z" fill="url(#tBB)"/>
          <path d="M781 648l14-3c3 5 4 11 3 17l-14 4z" fill="url(#tChL)"/>
          <path d="M801 570c1-9 15-9 16-1 8 18 9 45 7 79-5 5-13 3-17-1 0-29 0-51-6-77z" fill="url(#tLow)"/>
          <path d="M801 570c1-9 15-9 17-1-3 5-14 6-17 1z" fill="#3b4750" stroke="#2e6c94"/>
          <path d="M682 718l133-59 7 15-138 55z" fill="url(#tChR)"/>
          <ellipse cx="828" cy="667" rx="10" ry="14" transform="rotate(24 828 667)" fill="#d3cec9" stroke="#4d9dc7" stroke-width="1.200"/>
          <ellipse cx="829" cy="667" rx="7" ry="10" transform="rotate(24 829 667)" fill="#e6e1dc" stroke="#b0aaa5"/>
          <path d="M823 669l4-5 1 7-4 5c-2-2-2-4-1-7z" fill="#2e4652"/>
          <path d="M612 703c0-8 1-15 8-17l5 2 5 4-3 7-6-2-2 1v7c-2 3-6 2-7-2z" fill="#383836" stroke="#222"/>
          <path d="M666 746c-1-11 1-21 7-26l8 0 2 9-5 1-3-2c0 6 0 10-1 17-2 4-7 5-8 1z" fill="#41413f" stroke="#222"/>
          <circle cx="625" cy="694" r="2" fill="#888"/><circle cx="679" cy="725" r="2" fill="#888"/>
          <path d="M493 788v-15" stroke="#11601c" stroke-width="4"/><path d="M488 774l5-12 5 12z" fill="#178327" stroke="#0b4512"/>
          <path d="M493 788l13 6" stroke="#c62a1a" stroke-width="4"/><path d="M508 790l8 9-12-1z" fill="#d83824" stroke="#8c1d10"/>
          <path d="M493 788l-12 6" stroke="#1c2fb8" stroke-width="4"/><path d="M479 790l-7 9 11-1z" fill="#2237d3" stroke="#152382"/>
          <circle cx="493" cy="788" r="2.500" fill="#c0392b"/>
          <text class="axis" x="490" y="762" fill="#5a9a62">Y</text><text class="axis" x="513" y="805" fill="#e07a6c">X</text><text class="axis" x="467" y="805" fill="#7480dd">Z</text>
        </svg>
        <div class="hud">
          <button class="sel" aria-label="Isométrica"><svg class="i14"><use href="#cube"/></svg></button>
          <button aria-label="Zoom"><svg class="i14"><use href="#lens"/></svg></button>
          <button aria-label="Zoom de área"><svg class="i14"><use href="#lensarea"/></svg></button>
          <button aria-label="Vista previa"><svg class="i14"><use href="#prev"/></svg></button>
          <button aria-label="Sección"><svg class="i14"><use href="#section"/></svg></button>
          <button class="dd" aria-label="Orientación"><svg class="i14"><use href="#orient"/></svg></button>
          <button class="dd" aria-label="Visualización"><svg class="i14"><use href="#display"/></svg></button>
          <button class="dd" aria-label="Ocultar"><svg class="i14"><use href="#eye"/></svg></button>
          <button aria-label="Apariencia"><svg class="i14"><use href="#ball"/></svg></button>
          <button class="dd" aria-label="Escena"><svg class="i14"><use href="#scene"/></svg></button>
          <button class="dd" aria-label="Pantalla"><svg class="i14"><use href="#monitor"/></svg></button>
          <button class="dd" aria-label="Rayos X"><svg class="i14"><use href="#xray"/></svg></button>
          <button aria-label="Comparar"><svg class="i14"><use href="#scale"/></svg></button>
        </div>
        <span class="viewname">*Isométrica</span>
      </div>
    </div>

    <div class="bottom">
      <div class="bleft">
        <svg class="i14"><use href="#bfil"/></svg><svg class="i14"><use href="#bcub"/></svg><svg class="i14"><use href="#bpur"/></svg>
        <button class="pick" aria-label="Seleccionar"><svg class="i16"><use href="#arrow"/></svg><span></span></button>
        <svg class="i14"><use href="#bcub"/></svg>
      </div>
      <div class="bmain">
        <svg class="i14"><use href="#bdot"/></svg><svg class="i14"><use href="#bline"/></svg><svg class="i14"><use href="#bface"/></svg><svg class="i14"><use href="#surf"/></svg><svg class="i14"><use href="#bcube"/></svg><svg class="i14"><use href="#bdiag"/></svg><svg class="i14"><use href="#bpl"/></svg><svg class="i14"><use href="#bdot"/></svg><svg class="i14"><use href="#bang"/></svg><svg class="i14"><use href="#bdim"/></svg><svg class="i14"><use href="#bdiag"/></svg><svg class="i14"><use href="#bcirc"/></svg><svg class="i14"><use href="#brect"/></svg><svg class="i14"><use href="#bhex"/></svg><svg class="i14"><use href="#bchk"/></svg><svg class="i14"><use href="#bbox"/></svg><svg class="i14"><use href="#bmag"/></svg><svg class="i14"><use href="#btxt"/></svg><svg class="i14"><use href="#bweld"/></svg><svg class="i14"><use href="#bstep"/></svg><svg class="i14"><use href="#bmag"/></svg><svg class="i14"><use href="#bsq"/></svg><svg class="i14"><use href="#btxt"/></svg><svg class="i14"><use href="#bcog"/></svg><svg class="i14"><use href="#bcon"/></svg><svg class="i14"><use href="#bcon2"/></svg><svg class="i14"><use href="#bfp"/></svg><svg class="i14"><use href="#bvert"/></svg><svg class="i14"><use href="#bpt"/></svg><svg class="i14"><use href="#bfp"/></svg><svg class="i14"><use href="#bvert"/></svg><svg class="i14"><use href="#bpt"/></svg>
      </div>
    </div>
  </section>
</main>
<footer class="progress"><i></i></footer>
</body>
</html>
```
FILE: styles.css
```css
* { box-sizing: border-box; }
html, body { height: 100%; }
body {
  margin: 0;
  display: flex;
  flex-direction: column;
  background: #fcfcfc;
  color: #3c3c3c;
  font-family: "Open Sans", "Noto Sans", sans-serif;
  font-size: 10px;
  overflow: hidden;
}
button { font: inherit; color: inherit; background: none; border: 0; padding: 0; margin: 0; white-space: nowrap; }
svg { display: block; flex: none; }
.sprite { position: absolute; width: 0; height: 0; }
.i8 { width: 8px; height: 8px; }
.i12 { width: 12px; height: 12px; }
.i14 { width: 14px; height: 14px; }
.i16 { width: 16px; height: 16px; }

.slide-head { display: flex; justify-content: space-between; align-items: flex-start; height: 82px; flex: none; }
.banner {
  margin: 2px 0 0;
  width: 50.7%;
  height: 49px;
  padding-left: 11px;
  background: #0075c8;
  border-radius: 0 8px 8px 0;
  color: #fff;
  font-size: 26px;
  line-height: 50px;
  font-weight: 700;
}
.brand { width: 348px; height: 70px; }
.brand-text { font-family: "Liberation Sans Narrow", "DejaVu Sans Condensed", sans-serif; font-size: 48px; fill: #a9abad; }

.stage { flex: 1; min-height: 0; display: grid; grid-template-columns: 252fr 1055fr 331fr; }
.cursor { position: absolute; left: 221px; top: 663px; width: 12px; height: 18px; }
.app { grid-column: 2; min-width: 0; min-height: 0; display: flex; flex-direction: column; }

.titlebar { display: flex; height: 26px; flex: none; background: #e5e5e5; border-bottom: 1px solid #c6c6c6; }
.sw-logo {
  display: flex; align-items: center; gap: 2px;
  position: relative;
  width: 112px; height: 28px; margin-left: 8px; padding-left: 4px;
  background: linear-gradient(#fdfdfd, #ececec);
  border: 1px solid #c0c0c0; border-top: 0;
}
.sw-mark { width: 24px; height: 22px; }
.sw-name { color: #d8402c; font-family: Lato, sans-serif; font-size: 12px; line-height: 16px; }
.sw-name b { font-weight: 900; }
.menu { display: flex; align-items: center; gap: 12px; padding: 0 7px 0 22px; background: #f8f8f8; border-right: 1px solid #b5b5b5; }
.menu .pin { margin-left: 7px; }
.quick { display: flex; align-items: center; gap: 5px; padding-left: 12px; }
.quick button { display: flex; align-items: center; }
.dd::after { content: ""; margin-left: 6px; border: 2px solid transparent; border-top-color: #555; border-bottom: 0; }
.quick .dd::after { margin-left: 7px; }
.pick { display: flex; align-items: center; }
.pick svg { width: 20px; height: 20px; padding: 2px; background: #a9a9a9; border: 1px solid #8d8d8d; }
.pick span { width: 9px; height: 20px; background: #ebebeb; border: 1px solid #c0c0c0; display: flex; align-items: center; justify-content: center; }
.pick span::after { content: ""; border: 2px solid transparent; border-top-color: #555; border-bottom: 0; }
.doc { margin: auto 64px auto auto; line-height: 16px; }

.ribbon { display: flex; height: 66px; flex: none; background: #f5f5f5; border-bottom: 1px solid #b9b9b9; }
.group { display: flex; gap: 7px; padding: 4px 6px 0 2px; border-right: 1px solid #cdcdcd; }
.bigs { gap: 6px; padding: 4px 7px 0 9px; }
.big { display: flex; flex-direction: column; align-items: center; padding-top: 9px; line-height: 14px; text-align: center; }
.big svg { margin-bottom: 1px; }
.high { padding-top: 3px; }
.caret { margin-top: 17px; border: 2px solid transparent; border-top-color: #555; border-bottom: 0; }
.rows { display: flex; flex-direction: column; }
.rows button { display: flex; align-items: center; gap: 6px; height: 20px; line-height: 20px; }

.tabs { display: flex; height: 22px; flex: none; font-size: 11px; }
.tabs button { padding: 0 7px; background: #d0d0d0; border-right: 1px solid #a9a9a9; border-bottom: 1px solid #a0a0a0; }
.tabs .on { background: #fcfcfc; border-bottom-color: #fcfcfc; font-weight: 700; }
.tabs .last { padding: 0 11px; }

.work { flex: 1; min-height: 0; display: flex; }
.strip {
  width: 25px; height: 176px; flex: none;
  display: flex; flex-direction: column; align-items: center; gap: 6px;
  padding-top: 12px;
  background: #f6f6f6; border-bottom: 1px solid #b5b5b5;
}
.strip::before { content: ""; position: absolute; margin-top: -11px; width: 20px; border-top: 2px dotted #bdbdbd; }
.panel { position: relative; width: 178px; flex: none; display: flex; flex-direction: column; background: #f4f4f4; border-left: 1px solid #d8d8d8; border-right: 2px solid #bcbcbc; border-bottom: 1px solid #d0d0d0; margin-bottom: 3px; }
.grab { height: 22px; display: flex; align-items: center; justify-content: center; background: #fafafa; border-top: 1px solid #c9c9c9; }
.grab i, .handle i { width: 4px; height: 4px; border-radius: 50%; background: #b5b5b5; }
.ptabs { display: flex; height: 20px; flex: none; padding-left: 1px; border-top: 1px solid #c4c4c4; }
.ptabs button { width: 31px; display: flex; align-items: center; justify-content: center; background: #cecece; border-right: 1px solid #a5a5a5; border-bottom: 1px solid #bdbdbd; }
.ptabs .on { background: #fbfbfb; border-bottom-color: #fbfbfb; }
.ptabs .more { flex: 1; background: none; border: 0; }
.filter { display: flex; align-items: center; height: 24px; flex: none; margin: 1px 3px 0; padding-left: 1px; background: #fbfbfb; border: 1px solid #c8c8c8; }
.filter input { flex: 1; min-width: 0; border: 0; background: none; outline: 0; font: inherit; }
.treebox { flex: 1; min-height: 0; display: flex; }
.tree { flex: 1; min-width: 0; margin: 0; padding: 0 0 4px 20px; list-style: none; display: grid; grid-auto-rows: 1fr; font-size: 11px; overflow: hidden; }
.tree li { position: relative; display: flex; align-items: center; gap: 4px; min-height: 0; white-space: nowrap; line-height: 14px; }
.tree .sub { padding-left: 17px; }
.closed::before { content: ""; position: absolute; left: -14px; border: 3px solid transparent; border-left-color: #555; border-right: 0; }
.opened::before { content: ""; position: absolute; left: -15px; border: 3px solid transparent; border-top-color: #555; border-bottom: 0; }
.vscroll { width: 15px; flex: none; display: flex; flex-direction: column; align-items: center; padding: 4px 0; }
.vtrack { flex: 1; width: 14px; padding-top: 57px; }
.vtrack i { display: block; height: 85%; background: #cbcbcb; }
.hscroll { display: flex; align-items: center; height: 17px; flex: none; padding: 0 20px 0 4px; }
.htrack { flex: 1; height: 14px; padding-left: 5px; }
.htrack i { display: block; width: 53%; height: 14px; background: #cbcbcb; }
.handle { position: absolute; left: 175px; top: 292px; width: 10px; height: 38px; display: flex; align-items: center; justify-content: center; background: #fafafa; border: 1px solid #b5b5b5; z-index: 1; }

.view { position: relative; flex: 1; min-width: 0; }
.model { width: 100%; height: 100%; }
.axis { font-size: 10px; }
.hud { position: absolute; top: 2px; left: 313px; display: flex; align-items: center; gap: 6px; height: 20px; }
.hud button { display: flex; align-items: center; }
.hud .dd::after { border-top-color: #888; }
.hud .sel { padding: 2px; background: #9c9c9c; border: 1px solid #777; }
.viewname { position: absolute; left: 8px; bottom: 1px; font-family: Lato, sans-serif; font-size: 14px; line-height: 16px; font-weight: 700; color: #222; }

.bottom { display: flex; align-items: center; height: 16px; flex: none; background: #f5f5f5; overflow: hidden; padding-top: 6px; }
.bleft { display: flex; align-items: center; gap: 6px; padding: 0 6px 0 14px; border-left: 3px dotted #c4c4c4; border-right: 1px solid #b5b5b5; }
.bmain { display: flex; justify-content: space-between; width: 63%; margin-left: 6px; border-right: 1px solid #c4c4c4; padding-right: 5px; }
.progress { height: 2px; flex: none; background: #e2e2e2; }
.progress i { display: block; width: 86%; height: 2px; background: #b5b5b5; }
```
